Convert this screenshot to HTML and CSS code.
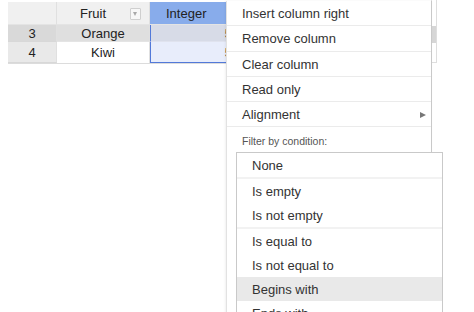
FILE: index.html
```html
<!DOCTYPE html>
<html lang="en">
<head>
    <meta charset="UTF-8">
    <meta name="viewport" content="width=device-width, initial-scale=1.0">
    <title>Column menu</title>
    <link rel="stylesheet" href="styles.css">
</head>
<body>
    <div class="sheet">
        <div class="cell corner"></div>
        <div class="cell head fruit-head">
            Fruit
            <span class="filter-btn"></span>
        </div>
        <div class="cell head selected-head">Integer</div>

        <div class="cell row-head row-hover">3</div>
        <div class="cell body-cell row-hover">Orange</div>
        <div class="cell num-cell num-hover">5</div>

        <div class="cell row-head">4</div>
        <div class="cell body-cell">Kiwi</div>
        <div class="cell num-cell">5</div>
    </div>

    <div class="scrollbar"><div class="thumb"></div></div>

    <div class="menu">
        <div class="menu-item">Insert column right</div>
        <div class="menu-item">Remove column</div>
        <div class="menu-item">Clear column</div>
        <div class="menu-item">Read only</div>
        <div class="menu-item has-sub">Alignment <span class="arrow"></span></div>
        <div class="menu-label">Filter by condition:</div>

        <div class="select-list">
            <div class="option">None</div>
            <div class="divider"></div>
            <div class="option">Is empty</div>
            <div class="option">Is not empty</div>
            <div class="divider"></div>
            <div class="option">Is equal to</div>
            <div class="option">Is not equal to</div>
            <div class="option active">Begins with</div>
            <div class="option">Ends with</div>
        </div>
    </div>
</body>
</html>
```

FILE: styles.css
```css
body {
    font-family: 'Liberation Sans', Arial, sans-serif;
    font-size: 13px;
    color: #222;
    background-color: #fff;
    margin: 0;
    padding: 0;
    height: 312px;
    overflow: hidden;
    position: relative;
}

.sheet {
    display: grid;
    grid-template-columns: 49px 93px 82px;
    grid-template-rows: 23px 17px 21px;
    margin: 2px 0 0 8px;
    width: 224px;
    border-bottom: 1px solid #dcdcdc;
}

.cell {
    display: flex;
    align-items: center;
    justify-content: center;
    box-sizing: border-box;
    border-right: 1px solid #e0e0e0;
    border-bottom: 1px solid #e4e4e4;
    overflow: hidden;
    white-space: nowrap;
}

.corner,
.head {
    background-color: #f0f0f0;
    padding-top: 1px;
}

.fruit-head {
    position: relative;
    padding-right: 20px;
}

.filter-btn {
    position: absolute;
    right: 8px;
    top: 6px;
    width: 9px;
    height: 10px;
    border: 1px solid #cfcfcf;
    border-radius: 1px;
    background-color: #f7f7f7;
}

.filter-btn::after {
    content: "";
    position: absolute;
    left: 2px;
    top: 3px;
    border-left: 2.5px solid transparent;
    border-right: 2.5px solid transparent;
    border-top: 4px solid #a8a8a8;
}

.selected-head {
    background-color: #88aceb;
    border-right: none;
    justify-content: flex-start;
    padding-left: 16px;
}

.row-head {
    background-color: #e9e9e9;
    border-bottom-color: #d8d8d8;
}

.row-head.row-hover {
    background-color: #d9d9d9;
}

.body-cell {
    background-color: #fff;
    border-bottom: none;
}

.body-cell.row-hover {
    background-color: #dfdfdf;
    border-bottom: 1px solid #e4e4e4;
}

.num-cell {
    justify-content: flex-end;
    padding-right: 0;
    background-color: #e8edfb;
    border-left: 1px solid #5279d9;
    border-right: none;
    border-bottom: 1px solid #5279d9;
}

.num-cell.num-hover {
    background-color: #d7dbe7;
    border-bottom: 1px solid #e0e3ee;
}

.scrollbar {
    position: absolute;
    left: 431px;
    top: 0;
    width: 4px;
    height: 62px;
    border: 1px solid #dedede;
    border-top: none;
    background-color: #fff;
}

.thumb {
    margin-top: 26px;
    height: 17px;
    background-color: #d6d6d6;
}

.menu {
    position: absolute;
    left: 226px;
    top: 1px;
    width: 206px;
    height: 320px;
    box-sizing: border-box;
    background-color: #fff;
    border-left: 1px solid #e2e2e2;
    border-right: 1px solid #c9c9c9;
    box-shadow: -1px 0 2px rgba(0, 0, 0, 0.06);
    color: #333;
}

.menu-item {
    height: 24.25px;
    line-height: 25px;
    padding-left: 15px;
    border-bottom: 1px solid #ebebeb;
    position: relative;
}

.arrow {
    position: absolute;
    right: 5px;
    top: 10px;
    border-top: 3px solid transparent;
    border-bottom: 3px solid transparent;
    border-left: 6px solid #777;
}

.menu-label {
    font-size: 10.5px;
    color: #555;
    height: 25px;
    line-height: 28px;
    padding-left: 15px;
}

.select-list {
    margin-left: 9px;
    width: 207px;
    box-sizing: border-box;
    border: 1px solid #c9c9c9;
    border-bottom: none;
    background-color: #fff;
}

.option {
    height: 24px;
    line-height: 25px;
    padding-left: 15px;
}

.option.active {
    background-color: #e9e9e9;
}

.divider {
    height: 2px;
    background-color: #f2f2f2;
}
```
